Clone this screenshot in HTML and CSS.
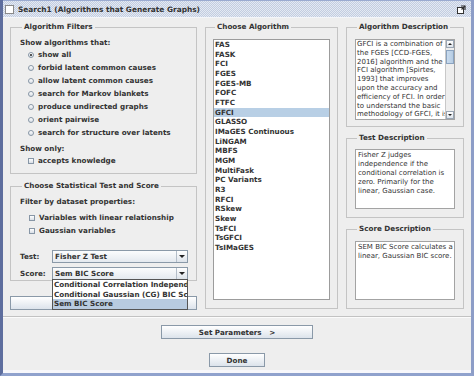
FILE: index.html
```html
<!DOCTYPE html>
<html lang="en">
<head>
    <meta charset="UTF-8">
    <meta name="viewport" content="width=device-width, initial-scale=1.0">
    <title>Search1 (Algorithms that Generate Graphs)</title>
    <link rel="stylesheet" href="styles.css">
</head>
<body>
<div class="frame">

    <!-- Barre de titre -->
    <div class="titlebar">
        <span class="title-icon"></span>
        <span class="title">Search1 (Algorithms that Generate Graphs)</span>
        <svg class="max-icon" width="9" height="9" viewBox="0 0 9 9">
            <rect x="0.5" y="2.5" width="6" height="6" fill="#fff" stroke="#333"/>
            <path d="M4 1 H8 V5" fill="none" stroke="#333" stroke-width="1.2"/>
            <path d="M8 1 L4.5 4.5" stroke="#333" stroke-width="1.2"/>
        </svg>
    </div>

    <div class="main">
        <!-- Colonne gauche -->
        <div class="col-left">
            <fieldset class="group filters">
                <legend>Algorithm Filters</legend>
                <div class="label">Show algorithms that:</div>
                <div class="opt"><span class="radio on"></span>show all</div>
                <div class="opt"><span class="radio"></span>forbid latent common causes</div>
                <div class="opt"><span class="radio"></span>allow latent common causes</div>
                <div class="opt"><span class="radio"></span>search for Markov blankets</div>
                <div class="opt"><span class="radio"></span>produce undirected graphs</div>
                <div class="opt"><span class="radio"></span>orient pairwise</div>
                <div class="opt"><span class="radio"></span>search for structure over latents</div>
                <div class="label show-only">Show only:</div>
                <div class="opt"><span class="check"></span>accepts knowledge</div>
            </fieldset>

            <fieldset class="group stats">
                <legend>Choose Statistical Test and Score</legend>
                <div class="label">Filter by dataset properties:</div>
                <div class="opt opt-data first"><span class="check"></span>Variables with linear relationship</div>
                <div class="opt opt-data"><span class="check"></span>Gaussian variables</div>

                <div class="combo-row test-row">
                    <span class="combo-label">Test:</span>
                    <div class="combo">
                        <span class="combo-text">Fisher Z Test</span>
                        <span class="combo-arrow"></span>
                    </div>
                </div>
                <div class="combo-row score-row">
                    <span class="combo-label">Score:</span>
                    <div class="combo">
                        <span class="combo-text">Sem BIC Score</span>
                        <span class="combo-arrow"></span>
                        <div class="popup">
                            <div>Conditional Correlation Independence Test</div>
                            <div>Conditional Gaussian (CG) BIC Score</div>
                            <div class="sel">Sem BIC Score</div>
                        </div>
                    </div>
                </div>
            </fieldset>

            <button class="btn btn-wide"></button>
        </div>

        <!-- Colonne du milieu -->
        <div class="col-mid">
            <fieldset class="group algos">
                <legend>Choose Algorithm</legend>
                <div class="list">
                    <div>FAS</div>
                    <div>FASK</div>
                    <div>FCI</div>
                    <div>FGES</div>
                    <div>FGES-MB</div>
                    <div>FOFC</div>
                    <div>FTFC</div>
                    <div class="sel">GFCI</div>
                    <div>GLASSO</div>
                    <div>IMaGES Continuous</div>
                    <div>LiNGAM</div>
                    <div>MBFS</div>
                    <div>MGM</div>
                    <div>MultiFask</div>
                    <div>PC Variants</div>
                    <div>R3</div>
                    <div>RFCI</div>
                    <div>RSkew</div>
                    <div>Skew</div>
                    <div>TsFCI</div>
                    <div>TsGFCI</div>
                    <div>TsIMaGES</div>
                </div>
            </fieldset>
        </div>

        <!-- Colonne droite -->
        <div class="col-right">
            <fieldset class="group desc desc-algo">
                <legend>Algorithm Description</legend>
                <div class="textbox scroll">
                    <div class="text">
                        GFCI is a combination of<br>
                        the FGES [CCD-FGES,<br>
                        2016] algorithm and the<br>
                        FCI algorithm [Spirtes,<br>
                        1993] that improves<br>
                        upon the accuracy and<br>
                        efficiency of FCI. In order<br>
                        to understand the basic<br>
                        methodology of GFCI, it is
                    </div>
                    <div class="scrollbar">
                        <span class="sb-btn up"></span>
                        <span class="sb-thumb"></span>
                        <span class="sb-track"></span>
                        <span class="sb-btn down"></span>
                    </div>
                </div>
            </fieldset>

            <fieldset class="group desc desc-test">
                <legend>Test Description</legend>
                <div class="textbox">
                    Fisher Z judges<br>
                    independence if the<br>
                    conditional correlation is<br>
                    zero. Primarily for the<br>
                    linear, Gaussian case.
                </div>
            </fieldset>

            <fieldset class="group desc desc-score">
                <legend>Score Description</legend>
                <div class="textbox">
                    SEM BIC Score calculates a<br>
                    linear, Gaussian BIC score.
                </div>
            </fieldset>
        </div>
    </div>

    <div class="separator"></div>

    <div class="footer">
        <button class="btn btn-params">Set Parameters &nbsp;&nbsp;&gt;</button>
        <button class="btn btn-done">Done</button>
    </div>
</div>
</body>
</html>
```

FILE: styles.css
```css
* {
    box-sizing: border-box;
}

body {
    margin: 0;
    font-family: "DejaVu Sans", sans-serif;
    font-size: 7.2px;
    color: #333;
    background-color: #eeeeee;
}

.frame {
    width: 474px;
    height: 376px;
    display: flex;
    flex-direction: column;
    background-color: #eeeeee;
    border-left: 3px solid #5e6e9e;
    border-right: 3px solid #8d9dc7;
    border-bottom: 3px solid #90a2cd;
    overflow: hidden;
}

/* Barre de titre */
.titlebar {
    height: 18px;
    flex-shrink: 0;
    display: flex;
    align-items: center;
    padding: 0 4px 0 2px;
    border-top: 1px solid #9aaad0;
    border-bottom: 1px solid #f4f6fa;
    background-color: #d3dbe9;
    background-image: repeating-conic-gradient(#c2cde1 0 25%, #e4e9f2 0 50%);
    background-size: 2px 2px;
}

.title-icon {
    width: 9px;
    height: 9px;
    background-color: #fff;
    border: 1px solid #8a8a8a;
    margin-right: 4px;
}

.title {
    font-weight: bold;
    font-size: 7.4px;
    flex: 1;
}

.max-icon {
    margin-right: 1px;
}

/* Zone principale */
.main {
    height: 298px;
    flex-shrink: 0;
    display: flex;
    gap: 8px;
    padding: 4px 7px 0;
}

.col-left {
    width: 187px;
    display: flex;
    flex-direction: column;
}

.col-mid {
    width: 133px;
}

.col-right {
    width: 118px;
    display: flex;
    flex-direction: column;
    gap: 6px;
}

.group {
    margin: 0;
    padding: 0;
    min-width: 0;
    border: 1px solid #c4c4c4;
}

.group legend {
    margin-left: 2px;
    padding: 0 2px;
    font-weight: bold;
    line-height: 10px;
}

.label {
    font-weight: bold;
    line-height: 10px;
}

.opt {
    display: flex;
    align-items: center;
    height: 13px;
    margin-left: 8px;
    font-weight: bold;
    white-space: nowrap;
}

.radio {
    width: 6px;
    height: 6px;
    border-radius: 50%;
    border: 1px solid #8796a6;
    background: linear-gradient(#ffffff, #d8dee6);
    margin-right: 4px;
    display: flex;
    align-items: center;
    justify-content: center;
}

.radio.on::after {
    content: "";
    width: 2px;
    height: 2px;
    border-radius: 50%;
    background-color: #222;
}

.check {
    width: 6px;
    height: 6px;
    border: 1px solid #8796a6;
    background: linear-gradient(#ffffff, #d8dee6);
    margin-right: 4px;
}

/* Filtres */
.filters {
    padding: 6px 0 6px 9px;
}

.show-only {
    margin-top: 5px;
}

/* Test et score */
.stats {
    margin-top: 7px;
    padding: 6px 7px 0 9px;
}

.opt-data {
    margin-left: 9px;
}

.opt-data.first {
    margin-top: 4px;
}

.combo-row {
    display: flex;
    align-items: center;
    height: 13px;
}

.test-row {
    margin-top: 13px;
}

.score-row {
    margin-top: 4px;
}

.combo-label {
    width: 32px;
    font-weight: bold;
}

.combo {
    position: relative;
    width: 136px;
    height: 13px;
    display: flex;
    align-items: center;
    border: 1px solid #8a99a8;
    background: linear-gradient(#fbfcfd, #e4e9ef);
}

.combo-text {
    flex: 1;
    padding-left: 2px;
    font-weight: bold;
}

.combo-arrow {
    width: 11px;
    height: 100%;
    display: flex;
    align-items: center;
    justify-content: center;
    border-left: 1px solid #b4bec9;
    background: linear-gradient(#ffffff, #dde3ea);
}

.combo-arrow::after {
    content: "";
    border-left: 3px solid transparent;
    border-right: 3px solid transparent;
    border-top: 3px solid #222;
}

.popup {
    position: absolute;
    top: 100%;
    left: -1px;
    width: 136px;
    border: 1px solid #555;
    background-color: #fff;
    z-index: 2;
}

.popup div {
    line-height: 9.67px;
    padding-left: 1px;
    font-weight: bold;
    white-space: nowrap;
    overflow: hidden;
}

.popup .sel {
    background-color: #b8cbe0;
}

.btn {
    font-family: "DejaVu Sans", sans-serif;
    font-size: 7.2px;
    font-weight: bold;
    color: #333;
    height: 14px;
    padding: 0;
    border: 1px solid #8a99a8;
    background: linear-gradient(#ffffff, #dce3eb);
}

.btn-wide {
    width: 187px;
    margin-top: 15px;
}

/* Liste des algorithmes */
.algos {
    height: 287px;
    padding: 7px 7px 8px;
}

.list {
    width: 117px;
    height: 261px;
    border: 1px solid #9c9c9c;
    background-color: #fff;
    overflow: hidden;
}

.list div {
    line-height: 9.67px;
    padding-left: 1px;
    font-weight: bold;
    white-space: nowrap;
}

.list .sel {
    background-color: #b8cfe5;
}

/* Descriptions */
.desc {
    padding: 7px 8px 8px;
}

.desc-algo {
    padding-bottom: 6px;
}

.desc-test {
    padding-top: 6px;
}

.textbox {
    width: 100px;
    background-color: #fff;
    border: 1px solid #a3a3a3;
    font-size: 7px;
    line-height: 9px;
    padding: 1px 1px 0 2px;
    white-space: nowrap;
    overflow: hidden;
}

.desc-algo .textbox {
    height: 81px;
}

.desc-test .textbox {
    height: 60px;
}

.desc-score .textbox {
    height: 59px;
}

.textbox.scroll {
    display: flex;
    padding: 0;
    line-height: 8.8px;
}

.textbox.scroll .text {
    flex: 1;
    overflow: hidden;
    padding: 0 0 0 1px;
}

.scrollbar {
    width: 9px;
    display: flex;
    flex-direction: column;
    background-color: #eeeeee;
    border-left: 1px solid #c8c8c8;
}

.sb-btn {
    height: 8px;
    display: flex;
    align-items: center;
    justify-content: center;
    border: 1px solid #9aa6b4;
    background: linear-gradient(#ffffff, #dce3eb);
}

.sb-btn.up::after {
    content: "";
    border-left: 2px solid transparent;
    border-right: 2px solid transparent;
    border-bottom: 2px solid #222;
}

.sb-btn.down::after {
    content: "";
    border-left: 2px solid transparent;
    border-right: 2px solid transparent;
    border-top: 2px solid #222;
}

.sb-thumb {
    height: 14px;
    margin-top: 2px;
    border: 1px solid #8aa3c0;
    background: linear-gradient(90deg, #c9dcef, #b5cbe2);
}

.sb-track {
    flex: 1;
}

/* Bas de fenetre */
.separator {
    height: 2px;
    flex-shrink: 0;
    border-top: 1px solid #c2c2c2;
    border-bottom: 1px solid #fbfbfb;
}

.footer {
    flex: 1;
    display: flex;
    flex-direction: column;
    align-items: center;
    gap: 14px;
    padding-top: 7px;
    border-bottom: 3px solid #f7f7fb;
}

.btn-params {
    width: 152px;
}

.btn-done {
    width: 56px;
}
```
